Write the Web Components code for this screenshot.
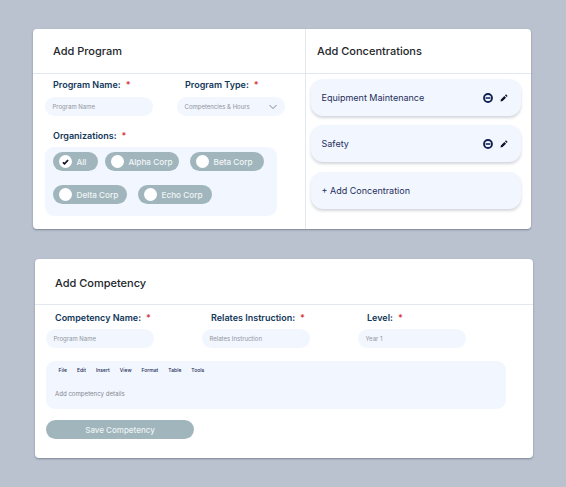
<!DOCTYPE html>
<html>
<head>
<meta charset="utf-8">
<title>Add Program</title>
<style>
  html, body { margin: 0; height: 100%; }
  body {
    background: #b9c2ce;
    padding: 29px 33px 0;
    box-sizing: border-box;
    font-family: "Inter", "Noto Sans", sans-serif;
  }
</style>
</head>
<body>
<program-card>
  <pill-field slot="fields" label="Program Name:" placeholder="Program Name"></pill-field>
  <pill-field slot="fields" label="Program Type:" placeholder="Competencies &amp; Hours" select></pill-field>
  <org-chip slot="orgs" checked>All</org-chip>
  <org-chip slot="orgs" style="width:74px">Alpha Corp</org-chip>
  <org-chip slot="orgs" style="width:74px;margin-left:4px">Beta Corp</org-chip>
  <org-chip slot="orgs" style="width:74px">Delta Corp</org-chip>
  <org-chip slot="orgs" style="width:74px;margin-left:4px">Echo Corp</org-chip>
  <concentration-row slot="rows" actions>Equipment Maintenance</concentration-row>
  <concentration-row slot="rows" actions>Safety</concentration-row>
  <concentration-row slot="rows">+ Add Concentration</concentration-row>
</program-card>
<competency-card>
  <pill-field slot="fields" label="Competency Name:" placeholder="Program Name"></pill-field>
  <pill-field slot="fields" label="Relates Instruction:" placeholder="Relates Instruction"></pill-field>
  <pill-field slot="fields" label="Level:" placeholder="Year 1"></pill-field>
</competency-card>

<script>
class PillField extends HTMLElement {
  connectedCallback() {
    this.attachShadow({ mode: "open" });
    const label = this.getAttribute("label");
    const placeholder = this.getAttribute("placeholder");
    const chevron = this.hasAttribute("select")
      ? `<svg width="8" height="6" viewBox="0 0 8 6"><path d="M.5 1l3.5 3.6L7.5 1" fill="none" stroke="#6f7f8c" stroke-width=".9"/></svg>`
      : "";
    this.shadowRoot.innerHTML = `
      <style>
        :host { display: block; width: 108px; }
        .label {
          font-size: 9px;
          font-weight: 600;
          line-height: 14px;
          color: #12385a;
          padding-left: var(--label-indent, 8px);
          white-space: nowrap;
        }
        .req { color: #d9363e; margin-left: 5px; }
        .pill {
          margin-top: var(--pill-gap, 5px);
          height: 19px;
          border-radius: 10px;
          background: #f2f6ff;
          display: flex;
          align-items: center;
          justify-content: space-between;
          padding: 0 8px 0 7.5px;
          font-size: 6px;
          color: #8f959c;
        }
      </style>
      <div class="label">${label}<span class="req">*</span></div>
      <div class="pill"><span>${placeholder}</span>${chevron}</div>
    `;
  }
}
customElements.define("pill-field", PillField);

class OrgChip extends HTMLElement {
  connectedCallback() {
    this.attachShadow({ mode: "open" });
    const tick = this.hasAttribute("checked")
      ? `<svg width="7" height="6" viewBox="0 0 8 7"><path d="M1 3.9l1.9 1.7L7 1.2" fill="none" stroke="#0c1024" stroke-width="2"/></svg>`
      : "";
    this.shadowRoot.innerHTML = `
      <style>
        :host {
          display: inline-flex;
          box-sizing: border-box;
          width: 45px;
          height: 19px;
          border-radius: 10px;
          background: #a0b5bc;
          align-items: center;
          padding-left: 5.5px;
          gap: 5px;
          color: #f2f6f7;
          font-size: 8.2px;
          font-weight: 500;
          white-space: nowrap;
        }
        .dot {
          width: 13px;
          height: 13px;
          border-radius: 50%;
          background: #fff;
          display: flex;
          align-items: center;
          justify-content: center;
          flex: none;
        }
      </style>
      <span class="dot">${tick}</span><slot></slot>
    `;
  }
}
customElements.define("org-chip", OrgChip);

class ConcentrationRow extends HTMLElement {
  connectedCallback() {
    this.attachShadow({ mode: "open" });
    const actions = this.hasAttribute("actions")
      ? `<span class="actions">
           <svg width="10" height="10" viewBox="0 0 10 10"><circle cx="5" cy="5" r="4" fill="none" stroke="#0e1f50" stroke-width="1.8"/><path d="M2.6 5h4.8" stroke="#0e1f50" stroke-width="1.5"/></svg>
           <svg width="8" height="8" viewBox="0 0 9 9"><path d="M.6 8.4l.4-2.3 3.9-3.9 1.9 1.9-3.9 3.9zM5.6 1.5l.8-.8a.5.5 0 0 1 .7 0l1.2 1.2a.5.5 0 0 1 0 .7l-.8.8z" fill="#0c1024"/></svg>
         </span>`
      : "";
    this.shadowRoot.innerHTML = `
      <style>
        :host {
          display: flex;
          box-sizing: border-box;
          height: 37px;
          border-radius: 12px;
          background: #f2f6ff;
          box-shadow: 0 2px 3px rgba(60, 70, 90, .22);
          align-items: center;
          justify-content: space-between;
          padding: 0 13px 0 10.5px;
          color: #1f2f5c;
          font-size: 9px;
        }
        .actions { display: flex; align-items: center; gap: 7px; }
        svg { display: block; }
      </style>
      <slot></slot>${actions}
    `;
  }
}
customElements.define("concentration-row", ConcentrationRow);

class ProgramCard extends HTMLElement {
  connectedCallback() {
    this.attachShadow({ mode: "open" });
    this.shadowRoot.innerHTML = `
      <style>
        :host {
          display: grid;
          grid-template-columns: 272px 226px;
          width: 498px;
          height: 200px;
          background: #fff;
          border-radius: 4px;
          box-shadow: 0 1px 2px rgba(50, 60, 80, .45);
        }
        .col + .col { border-left: 1px solid #e3e8ee; }
        .col { box-sizing: border-box; min-width: 0; }
        h2 {
          margin: 0;
          height: 45px;
          box-sizing: border-box;
          border-bottom: 1px solid #e3e8ee;
          display: flex;
          align-items: center;
          padding-left: 20px;
          font-size: 11px;
          font-weight: 500;
          color: #23262b;
        }
        .fields { display: flex; gap: 24px; padding: 4px 0 0 12px; }
        .org-label {
          margin: 13px 0 0 20px;
          font-size: 9px;
          font-weight: 600;
          line-height: 14px;
          color: #12385a;
        }
        .req { color: #d9363e; margin-left: 5px; }
        .orgs {
          margin: 4px 0 0 12px;
          width: 232px;
          height: 69px;
          box-sizing: border-box;
          border-radius: 9px;
          background: #f2f6ff;
          padding: 5px 8px;
          display: flex;
          flex-wrap: wrap;
          align-content: flex-start;
          gap: 14px 7px;
        }
        .rows { display: flex; flex-direction: column; gap: 9px; padding: 5px 10px 0 5px; }
        .rows ::slotted(:last-child) { margin-top: 1px; }
      </style>
      <div class="col">
        <h2>Add Program</h2>
        <div class="fields"><slot name="fields"></slot></div>
        <div class="org-label">Organizations:<span class="req">*</span></div>
        <div class="orgs"><slot name="orgs"></slot></div>
      </div>
      <div class="col">
        <h2 style="padding-left:11px">Add Concentrations</h2>
        <div class="rows"><slot name="rows"></slot></div>
      </div>
    `;
  }
}
customElements.define("program-card", ProgramCard);

class CompetencyCard extends HTMLElement {
  connectedCallback() {
    this.attachShadow({ mode: "open" });
    const menu = ["File", "Edit", "Insert", "View", "Format", "Table", "Tools"];
    this.shadowRoot.innerHTML = `
      <style>
        :host {
          display: block;
          margin: 30px 0 0 2px;
          width: 498px;
          height: 199px;
          background: #fff;
          border-radius: 4px;
          box-shadow: 0 1px 2px rgba(50, 60, 80, .45);
          --label-indent: 9px;
          --pill-gap: 4px;
        }
        h2 {
          margin: 0;
          height: 46px;
          box-sizing: border-box;
          border-bottom: 1px solid #e3e8ee;
          display: flex;
          align-items: center;
          padding: 2px 0 0 20px;
          font-size: 11px;
          font-weight: 500;
          color: #23262b;
        }
        .fields { display: flex; gap: 48px; padding: 6px 0 0 11px; }
        .editor {
          margin: 13px 0 0 11px;
          width: 460px;
          height: 48px;
          box-sizing: border-box;
          border-radius: 9px;
          background: #f2f6ff;
          padding: 6px 0 0 12.5px;
        }
        .menu { display: flex; gap: 10px; font-size: 5px; font-weight: 500; line-height: 7px; color: #1a2b55; }
        .body { margin: 16px 0 0 -3.5px; font-size: 6.1px; color: #85898f; }
        button {
          display: block;
          margin: 11px 0 0 11px;
          width: 148px;
          height: 19px;
          border: 0;
          border-radius: 10px;
          background: #a0b5bc;
          color: #eef3f4;
          font: 500 8px "Inter", "Noto Sans", sans-serif;
        }
      </style>
      <h2>Add Competency</h2>
      <div class="fields"><slot name="fields"></slot></div>
      <div class="editor">
        <div class="menu">${menu.map((m) => `<span>${m}</span>`).join("")}</div>
        <div class="body">Add competency details</div>
      </div>
      <button>Save Competency</button>
    `;
  }
}
customElements.define("competency-card", CompetencyCard);
</script>
</body>
</html>
